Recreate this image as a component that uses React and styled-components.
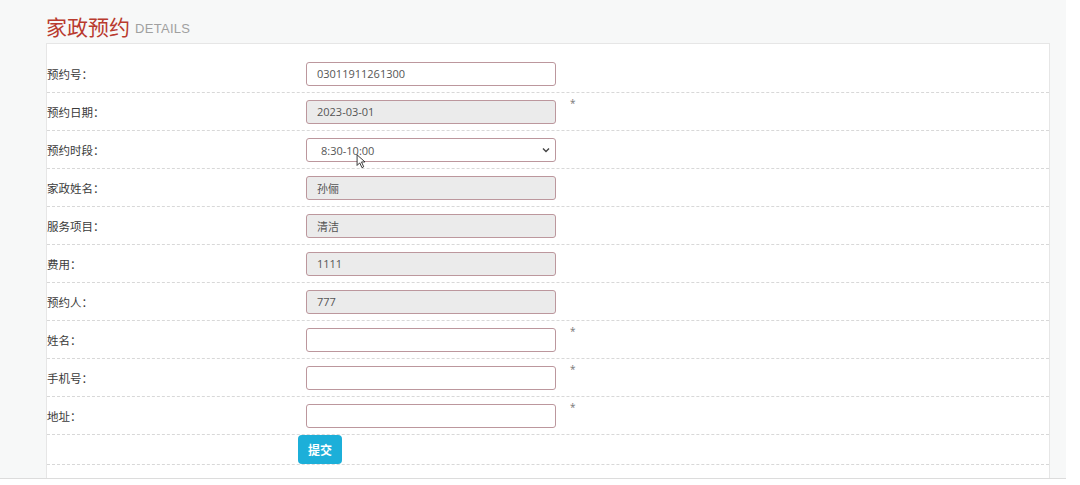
import React from "react";
import styled, { createGlobalStyle } from "styled-components";

const Global = createGlobalStyle`
  html, body { margin: 0; padding: 0; background: #ffffff; }
  body { font-family: "Open Sans", "Noto Sans CJK SC", sans-serif; color: #333; }
  * { box-sizing: border-box; }
`;

const Page = styled.div`
  width: 1066px;
  height: 479px;
  background: #f7f8f8;
  border-bottom: 1px solid #dcdcdc;
  padding: 0 16px 0 46px;
  overflow: hidden;
`;

const TitleBar = styled.div`
  height: 43px;
  display: flex;
  align-items: flex-end;
  gap: 5px;
  padding-bottom: 5px;
`;

const Title = styled.h1`
  margin: 0;
  font-family: "Noto Sans CJK SC", sans-serif;
  font-weight: 400;
  font-size: 21px;
  line-height: 24px;
  color: #b93a2e;
`;

const Sub = styled.span`
  font-family: "Liberation Sans", Arial, sans-serif;
  font-size: 13px;
  line-height: 19px;
  color: #a0a0a0;
  letter-spacing: 0.3px;
`;

const Panel = styled.form`
  background: #fff;
  border: 1px solid #e6e6e6;
  border-bottom: none;
  padding-top: 11px;
  height: 436px;
  position: relative;
`;

const Row = styled.div`
  display: grid;
  grid-template-columns: 259px 250px 1fr;
  align-items: center;
  height: ${(p) => (p.$short ? 30 : 38)}px;
  border-bottom: 1px dashed #d8d8d8;
`;

const Label = styled.label`
  font-family: "Noto Sans CJK SC", sans-serif;
  font-size: 11.5px;
  color: #3a3a3a;
`;

const Field = styled.input`
  width: 250px;
  height: 24px;
  border: 1px solid #bc979d;
  border-radius: 3px;
  background: ${(p) => (p.readOnly ? "#ebebeb" : "#fff")};
  font-family: "Open Sans", "Noto Sans CJK SC", sans-serif;
  font-size: 11px;
  color: #555;
  padding: 0 10px;
  outline: none;
`;

const SelectWrap = styled.div`
  position: relative;
  width: 250px;
  height: 24px;
`;

const Select = styled.select`
  appearance: none;
  width: 100%;
  height: 100%;
  border: 1px solid #bc979d;
  border-radius: 3px;
  background: #fff;
  font-family: "Open Sans", sans-serif;
  font-size: 11px;
  color: #555;
  padding: 0 14px;
  outline: none;
`;

const Chevron = styled.svg`
  position: absolute;
  right: 6px;
  top: 9px;
  pointer-events: none;
`;

const Star = styled.span`
  align-self: start;
  margin-top: 3px;
  padding-left: 14px;
  font-size: 10px;
  color: #777;
`;

const Button = styled.button`
  grid-column: 2;
  margin-left: -8px;
  width: 44px;
  height: 29px;
  border: none;
  border-radius: 4px;
  background: #1cafd9;
  color: #fff;
  font-family: "Noto Sans CJK SC", sans-serif;
  font-weight: 700;
  font-size: 12px;
  cursor: pointer;
  align-self: start;
`;

const Cursor = styled.svg`
  position: absolute;
  left: 309px;
  top: 110px;
`;

const rows = [
  { label: "预约号：", value: "03011911261300" },
  { label: "预约日期：", value: "2023-03-01", readOnly: true, star: true },
  { label: "预约时段：", select: true },
  { label: "家政姓名：", value: "孙俪", readOnly: true },
  { label: "服务项目：", value: "清洁", readOnly: true },
  { label: "费用：", value: "1111", readOnly: true },
  { label: "预约人：", value: "777", readOnly: true },
  { label: "姓名：", value: "", star: true },
  { label: "手机号：", value: "", star: true },
  { label: "地址：", value: "", star: true },
];

export default function App() {
  return (
    <>
      <Global />
      <Page>
        <TitleBar>
          <Title>家政预约</Title>
          <Sub>DETAILS</Sub>
        </TitleBar>
        <Panel onSubmit={(e) => e.preventDefault()}>
          {rows.map((r) => (
            <Row key={r.label}>
              <Label>{r.label}</Label>
              {r.select ? (
                <SelectWrap>
                  <Select defaultValue="8:30-10:00">
                    <option>8:30-10:00</option>
                  </Select>
                  <Chevron width="8" height="6" viewBox="0 0 8 6">
                    <path d="M1 1.5 L4 4.5 L7 1.5" fill="none" stroke="#444" strokeWidth="1.4" />
                  </Chevron>
                </SelectWrap>
              ) : (
                <Field defaultValue={r.value} readOnly={!!r.readOnly} />
              )}
              {r.star ? <Star>*</Star> : <span />}
            </Row>
          ))}
          <Row $short>
            <Button type="submit">提交</Button>
          </Row>
          <Cursor width="11" height="15" viewBox="0 0 12 17">
            <path d="M1 1 L1 13 L4 10 L6.5 15.5 L8.5 14.5 L6 9 L10 9 Z" fill="#fff" stroke="#222" strokeWidth="1" />
          </Cursor>
        </Panel>
      </Page>
    </>
  );
}
